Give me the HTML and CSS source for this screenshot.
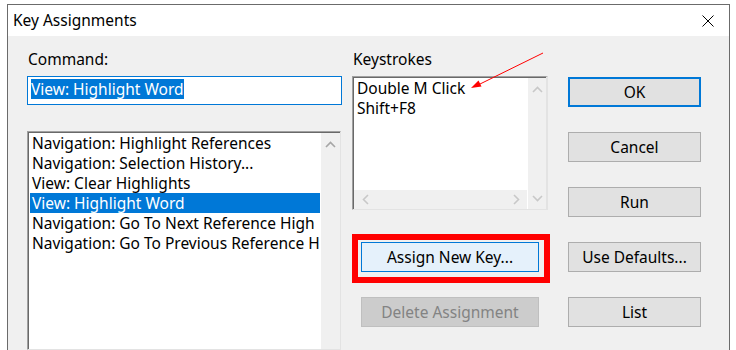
FILE: index.html
```html
<!DOCTYPE html>
<html lang="en">
<head>
	<meta charset="UTF-8">
	<title>Key Assignments</title>
	<link rel="stylesheet" href="styles.css">
</head>
<body>
<div class="window">
	<div class="titlebar">
		<span class="title">Key Assignments</span>
		<svg class="close" width="12" height="12" viewBox="0 0 12 12">
			<path d="M0.5 0.5 L11.5 11.5 M11.5 0.5 L0.5 11.5" stroke="#000" stroke-width="1" fill="none"/>
		</svg>
	</div>
	<div class="content">
		<div class="col-left">
			<div class="label">Command:</div>
			<div class="textbox"><span class="sel">View: Highlight Word</span></div>
			<div class="listbox cmd-list">
				<div class="items">
					<div class="item">Navigation: Highlight References</div>
					<div class="item">Navigation: Selection History...</div>
					<div class="item">View: Clear Highlights</div>
					<div class="item selected">View: Highlight Word</div>
					<div class="item">Navigation: Go To Next Reference High</div>
					<div class="item">Navigation: Go To Previous Reference H</div>
				</div>
				<div class="vscroll">
					<svg class="chev" width="11" height="7" viewBox="0 0 11 7"><path d="M1 6 L5.5 1.5 L10 6" stroke="#a6a6a6" stroke-width="1.6" fill="none"/></svg>
				</div>
			</div>
		</div>
		<div class="col-mid">
			<div class="label">Keystrokes</div>
			<div class="listbox keys-list">
				<div class="keys-main">
					<div class="items">
						<div class="item">Double M Click</div>
						<div class="item">Shift+F8</div>
					</div>
					<div class="hscroll">
						<svg class="chev" width="7" height="11" viewBox="0 0 7 11"><path d="M6 1 L1.5 5.5 L6 10" stroke="#c8c8c8" stroke-width="1.6" fill="none"/></svg>
						<svg class="chev" width="7" height="11" viewBox="0 0 7 11"><path d="M1 1 L5.5 5.5 L1 10" stroke="#c8c8c8" stroke-width="1.6" fill="none"/></svg>
					</div>
				</div>
				<div class="vscroll keys-v">
					<svg class="chev" width="11" height="7" viewBox="0 0 11 7"><path d="M1 6 L5.5 1.5 L10 6" stroke="#c8c8c8" stroke-width="1.6" fill="none"/></svg>
					<svg class="chev" width="11" height="7" viewBox="0 0 11 7"><path d="M1 1 L5.5 5.5 L10 1" stroke="#c8c8c8" stroke-width="1.6" fill="none"/></svg>
				</div>
			</div>
			<div class="highlight-box">
				<button class="btn focus">Assign New Key...</button>
			</div>
			<button class="btn disabled">Delete Assignment</button>
		</div>
		<div class="col-right">
			<button class="btn default">OK</button>
			<button class="btn">Cancel</button>
			<button class="btn">Run</button>
			<button class="btn">Use Defaults...</button>
			<button class="btn">List</button>
		</div>
	</div>
</div>
<!-- annotation arrow drawn over the dialog -->
<svg class="annot" width="736" height="350" viewBox="0 0 736 350">
	<line x1="543" y1="53" x2="478" y2="85" stroke="#ff0000" stroke-width="1"/>
	<polygon points="471,88 481.5,86.5 478.5,80.5" fill="#ff0000"/>
</svg>
</body>
</html>
```
FILE: styles.css
```css
html, body {
	margin: 0;
	background: #fff;
	overflow: hidden;
	height: 350px;
}
body {
	padding-top: 4px;
	box-sizing: border-box;
	font-family: "Noto Sans", "Open Sans", sans-serif;
	font-size: 15.5px;
	color: #000;
}
.window {
	margin-left: 7px;
	width: 723px;
	height: 346px;
	overflow: hidden;
	box-sizing: border-box;
	border: 1px solid #6b6b6b;
	border-bottom: none;
	background: #f0f0f0;
}
.titlebar {
	height: 31px;
	background: #fff;
	display: flex;
	align-items: center;
	justify-content: space-between;
	padding: 0 15px 0 5px;
}
.title {
	line-height: 20px;
	margin-top: -1px;
}
.close {
	display: block;
}
.content {
	display: flex;
	padding: 14px 0 0 19px;
	height: 314px;
	box-sizing: border-box;
}
.label {
	line-height: 20px;
	height: 20px;
	padding-left: 1px;
	flex-shrink: 0;
	margin-top: -1px;
	margin-bottom: 1px;
}
.col-left {
	width: 315px;
	display: flex;
	flex-direction: column;
}
.textbox {
	margin-top: 6px;
	height: 29px;
	flex-shrink: 0;
	box-sizing: border-box;
	border: 1px solid #0078d7;
	background: #fff;
	padding: 2px 3px 0;
	line-height: 20px;
}
.sel {
	background: #0078d7;
	color: #fff;
	display: inline-block;
	height: 20px;
}
.listbox {
	background: #fff;
	border-style: solid;
	border-width: 1px;
	border-color: #a0a0a0 #e3e3e3 #e3e3e3 #a0a0a0;
	box-shadow: inset 1px 1px #696969;
	display: flex;
	box-sizing: border-box;
}
.cmd-list {
	margin-top: 26px;
	flex: 1;
	min-height: 0;
	width: 314px;
}
.items {
	flex: 1;
	min-width: 0;
	padding: 1px 1px 0 2px;
	overflow: hidden;
}
.item {
	height: 20px;
	line-height: 20px;
	padding-left: 2px;
	white-space: nowrap;
	overflow: hidden;
}
.item.selected {
	background: #0078d7;
	color: #fff;
}
.vscroll {
	width: 19px;
	background: #f0f0f0;
	display: flex;
	flex-direction: column;
	align-items: center;
	padding: 8px 0;
	margin-top: 1px;
	box-sizing: border-box;
}
.chev {
	display: block;
}
.col-mid {
	margin-left: 10px;
	width: 198px;
	display: flex;
	flex-direction: column;
}
.keys-list {
	margin-top: 6px;
	width: 196px;
	height: 134px;
	flex-shrink: 0;
	border-width: 1px 2px 1px 1px;
}
.keys-main {
	flex: 1;
	display: flex;
	flex-direction: column;
	min-width: 0;
}
.keys-list .items {
	padding: 1px 0 0 2px;
}
.hscroll {
	height: 19px;
	background: #f0f0f0;
	display: flex;
	justify-content: space-between;
	align-items: center;
	padding: 0 7px 0 8px;
	margin-left: 1px;
}
.keys-v {
	justify-content: space-between;
	padding: 8px 0 7px;
	border-left: 1px solid #fff;
}
.highlight-box {
	margin-top: 24px;
	height: 49px;
	width: 198px;
	flex-shrink: 0;
	box-sizing: border-box;
	border: 6px solid #ff0000;
	background: #f0f0f0;
	padding: 2px 5px 0 3px;
}
.btn {
	display: block;
	font-family: "Noto Sans", "Open Sans", sans-serif;
	font-size: 15.5px;
	color: #000;
	height: 30px;
	flex-shrink: 0;
	box-sizing: border-box;
	background: #e1e1e1;
	border: 1px solid #adadad;
	padding: 0;
	margin: 0;
	line-height: 27px;
}
.col-mid .btn {
	width: 178px;
}
.col-mid > .btn {
	margin-top: 14px;
	margin-left: 9px;
}
.btn.focus {
	background: #e5f1fb;
	border-color: #0078d7;
}
.btn.disabled {
	background: #cccccc;
	border-color: #bfbfbf;
	color: #838383;
}
.col-right {
	margin-left: 18px;
	padding-top: 27px;
	display: flex;
	flex-direction: column;
	gap: 25px;
}
.col-right .btn {
	width: 133px;
}
.btn.default {
	border: 2px solid #0078d7;
}
.annot {
	position: absolute;
	left: 0;
	top: 0;
	pointer-events: none;
}
```
